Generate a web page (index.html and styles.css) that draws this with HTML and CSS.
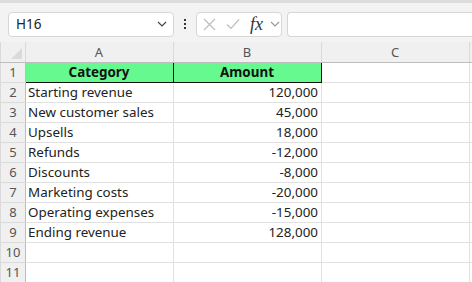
FILE: index.html
```html
<!DOCTYPE html>
<html lang="en">
<head>
    <meta charset="UTF-8">
    <title>Revenue sheet</title>
    <link rel="stylesheet" href="styles.css">
</head>
<body>
    <div class="toolbar">
        <div class="namebox">
            <span>H16</span>
            <svg class="chev" width="10" height="6" viewBox="0 0 10 6"><path d="M1 1 L5 5 L9 1" fill="none" stroke="#444" stroke-width="1.2"/></svg>
        </div>
        <div class="dots"><i></i><i></i><i></i></div>
        <div class="fbuttons">
            <svg class="ico-x" width="13" height="13" viewBox="0 0 13 13"><path d="M1 1 L12 12 M12 1 L1 12" stroke="#bdbdbd" stroke-width="1.2"/></svg>
            <svg class="ico-ok" width="14" height="12" viewBox="0 0 14 12"><path d="M1 6.5 L5 10.5 L13 1.5" fill="none" stroke="#bdbdbd" stroke-width="1.2"/></svg>
            <span class="fx">fx</span>
            <svg class="ico-chev" width="10" height="6" viewBox="0 0 10 6"><path d="M1 1 L5 5 L9 1" fill="none" stroke="#999" stroke-width="1.2"/></svg>
        </div>
        <div class="formula"></div>
    </div>

    <table class="sheet">
        <colgroup>
            <col class="c-row"><col class="c-cell"><col class="c-cell"><col class="c-cell"><col class="c-rest">
        </colgroup>
        <thead>
            <tr>
                <th class="corner"><span></span></th>
                <th>A</th><th>B</th><th>C</th><th></th>
            </tr>
        </thead>
        <tbody>
            <tr class="head">
                <th>1</th><td>Category</td><td>Amount</td><td class="blank"></td><td class="blank"></td>
            </tr>
            <tr><th>2</th><td>Starting revenue</td><td class="num">120,000</td><td></td><td></td></tr>
            <tr><th>3</th><td>New customer sales</td><td class="num">45,000</td><td></td><td></td></tr>
            <tr><th>4</th><td>Upsells</td><td class="num">18,000</td><td></td><td></td></tr>
            <tr><th>5</th><td>Refunds</td><td class="num">-12,000</td><td></td><td></td></tr>
            <tr><th>6</th><td>Discounts</td><td class="num">-8,000</td><td></td><td></td></tr>
            <tr><th>7</th><td>Marketing costs</td><td class="num">-20,000</td><td></td><td></td></tr>
            <tr><th>8</th><td>Operating expenses</td><td class="num">-15,000</td><td></td><td></td></tr>
            <tr><th>9</th><td>Ending revenue</td><td class="num">128,000</td><td></td><td></td></tr>
            <tr><th>10</th><td></td><td></td><td></td><td></td></tr>
            <tr><th>11</th><td></td><td></td><td></td><td></td></tr>
        </tbody>
    </table>
</body>
</html>
```

FILE: styles.css
```css
body {
    margin: 0;
    width: 472px;
    height: 282px;
    overflow: hidden;
    background: #fff;
    font-family: "Noto Sans", "Open Sans", sans-serif;
    color: #222;
}

.toolbar {
    height: 42px;
    box-sizing: border-box;
    background: #f3f3f3;
    border-top: 3px solid #dcdcdc;
    display: flex;
    align-items: center;
    padding: 3px 0 0 8px;
}

.namebox {
    width: 166px;
    height: 25px;
    box-sizing: border-box;
    background: #fff;
    border: 1px solid #d6d6d6;
    border-radius: 4px;
    display: flex;
    align-items: center;
    justify-content: space-between;
    padding: 0 6px 0 7px;
    font-size: 13.5px;
    color: #222;
}

.dots {
    width: 22px;
    display: flex;
    flex-direction: column;
    align-items: center;
    gap: 2px;
}

.dots i {
    width: 2px;
    height: 2px;
    background: #333;
}

.fbuttons {
    width: 86px;
    height: 25px;
    box-sizing: border-box;
    background: #fff;
    border: 1px solid #d6d6d6;
    border-radius: 4px;
    display: flex;
    align-items: center;
    padding: 0 0 0 6px;
}

.fbuttons svg,
.fbuttons span {
    flex-shrink: 0;
}

.ico-ok {
    margin-left: 10px;
}

.fx {
    font-family: "Liberation Serif", serif;
    font-style: italic;
    font-size: 18px;
    line-height: 20px;
    color: #333;
    margin-left: 10px;
    width: 17px;
}

.ico-chev {
    margin-left: 3px;
}

.formula {
    flex: 1;
    height: 25px;
    margin-left: 5px;
    box-sizing: border-box;
    background: #fff;
    border: 1px solid #d6d6d6;
    border-right: none;
    border-radius: 4px 0 0 4px;
}

.sheet {
    border-collapse: collapse;
    table-layout: fixed;
    width: 472px;
    font-size: 13.4px;
}

.c-row { width: 25px; }
.c-cell { width: 148px; }
.c-rest { width: 3px; }

.sheet th,
.sheet td {
    height: 20px;
    padding: 0 3px 0 2px;
    box-sizing: border-box;
    border: 1px solid #e1e1e1;
    white-space: nowrap;
    overflow: hidden;
    line-height: 18px;
}

.sheet thead th {
    background: #f0f0f0;
    font-weight: normal;
    color: #555;
    font-size: 13px;
    border-color: #dadada;
    border-bottom: 1px solid #bdbdbd;
    border-top: none;
}

.sheet tbody th {
    background: #f0f0f0;
    font-weight: normal;
    color: #555;
    font-size: 13px;
    text-align: center;
    border-color: #dadada;
    border-right: 1px solid #bdbdbd;
    padding: 0;
}

.corner {
    position: relative;
}

.corner span {
    position: absolute;
    right: 3px;
    bottom: 3px;
    width: 0;
    height: 0;
    border-left: 11px solid transparent;
    border-bottom: 11px solid #dadada;
}

.head td {
    background: #66f98f;
    font-weight: bold;
    text-align: center;
    border: 1px solid #111;
    color: #111;
}

.head td.blank {
    background: #fff;
    border: 1px solid #e1e1e1;
    border-left-color: #111;
    border-bottom-color: #e1e1e1;
}

.num {
    text-align: right;
}
```
